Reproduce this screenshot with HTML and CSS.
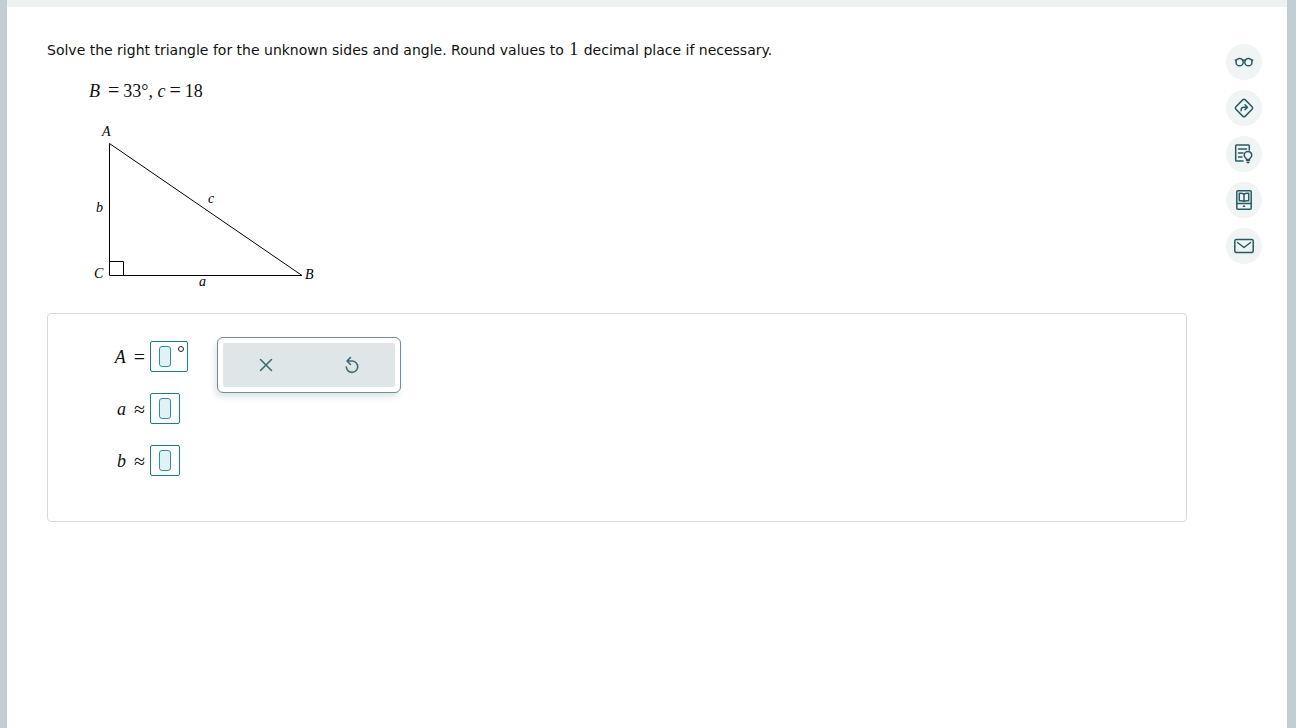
FILE: index.html
```html
<!DOCTYPE html>
<html lang="en">
<head>
<meta charset="utf-8">
<meta name="viewport" content="width=device-width, initial-scale=1">
<title>Solving a right triangle</title>
<link rel="stylesheet" href="styles.css">
</head>
<body>
<div class="page">
  <main class="question">
    <p class="prompt">Solve the right triangle for the unknown sides and angle. Round values to <span class="num">1</span> decimal place if necessary.</p>
    <p class="given"><i class="given-angle">B</i><span class="eq">=</span>33°, <i>c</i><span class="eq">=</span>18</p>
    <svg class="figure" viewBox="0 0 240 180" role="img" aria-label="Right triangle ABC with the right angle at C">
      <path class="edge" d="M22.5 23.500V155.500H215z"/>
      <path class="edge" d="M22.500 141.500h14v14"/>
      <text x="15" y="16">A</text>
      <text x="9" y="92">b</text>
      <text x="121" y="83">c</text>
      <text x="7" y="158">C</text>
      <text x="112" y="166">a</text>
      <text x="218" y="159">B</text>
    </svg>
    <form class="answers">
      <div class="fields">
        <label class="name" for="angle-a"><i>A</i><span class="sign">=</span></label>
        <span class="box"><input class="entry" id="angle-a" type="text"><span class="degree"></span></span>
        <label class="name" for="side-a"><i>a</i><span class="sign">≈</span></label>
        <span class="box"><input class="entry" id="side-a" type="text"></span>
        <label class="name" for="side-b"><i>b</i><span class="sign">≈</span></label>
        <span class="box"><input class="entry" id="side-b" type="text"></span>
      </div>
      <div class="keypad">
        <div class="keys">
          <button class="key" type="button" aria-label="Clear"><svg class="key-icon" viewBox="0 0 18 18"><path d="M3.500 3.500l11 11M14.500 3.500l-11 11"/></svg></button>
          <button class="key" type="reset" aria-label="Undo"><svg class="key-icon" viewBox="0 0 18 18"><path d="M7.500 1.500L4 5l3.500 3.500M4 5h5.500a5.700 5.700 0 1 1-6.200 6"/></svg></button>
        </div>
      </div>
    </form>
  </main>
  <nav class="rail" aria-label="Tools">
    <button class="tool" type="button" aria-label="Accessibility view"><svg class="tool-icon" viewBox="0 0 22 22"><circle cx="6.600" cy="11.200" r="3.600"/><circle cx="15.400" cy="11.200" r="3.600"/><path d="M9.500 9.300q1.500-.8 3 0M3.300 9.700l-1-.7M18.700 9.700l1-.7"/></svg></button>
    <button class="tool" type="button" aria-label="Explanation"><svg class="tool-icon" viewBox="0 0 22 22"><path d="M9.700 2.900q1.300-1.200 2.600 0l6.800 6.800q1.200 1.300 0 2.600l-6.800 6.800q-1.300 1.200-2.600 0L2.900 12.300q-1.200-1.300 0-2.600z"/><path d="M8 13.800c0-2.500 1-3.600 3-3.600h3M12 7.800l2.500 2.400-2.500 2.400"/></svg></button>
    <button class="tool" type="button" aria-label="Hints"><svg class="tool-icon" viewBox="0 0 22 22"><path d="M10 18H3.500q-.8 0-.8-.8V2.800q0-.8.800-.8h12q.8 0 .8.800V7M5.500 6h8M5.500 10h4.500M5.500 14h3.500"/><path d="M13.500 16.500c0-1.500-2.300-2-2.300-4.200a3.800 3.800 0 0 1 7.600 0c0 2.200-2.300 2.700-2.300 4.200zM13.500 17.500h3M14.200 19.500h1.600"/></svg></button>
    <button class="tool" type="button" aria-label="E-book"><svg class="tool-icon" viewBox="0 0 22 22"><rect x="3.800" y="1.800" width="14.400" height="18.400" rx="1"/><path d="M3.800 14.500h14.400M11 4.800v7.500M11 5.300C9.500 4 8 4 6.300 4.300v7.500c1.700-.3 3.200-.3 4.700.7 1.500-1 3-1 4.700-.7V4.300C14 4 12.500 4 11 5.300zM10.400 17.300h1.200"/></svg></button>
    <button class="tool" type="button" aria-label="Message"><svg class="tool-icon" viewBox="0 0 22 22"><rect x="1.800" y="4.500" width="18.400" height="13" rx="1.500"/><path d="M4.500 7.500l6.500 5 6.500-5"/></svg></button>
  </nav>
</div>
</body>
</html>
```
FILE: styles.css
```css
* {
  box-sizing: border-box;
}

body {
  margin: 0;
  background: #c1ced4;
  color: #111;
  font: 14px/26px "DejaVu Sans", Verdana, sans-serif;
}

.page {
  display: flex;
  gap: 39px;
  min-height: 100vh;
  margin: 0 9px 0 7px;
  padding: 30px 25px 30px 40px;
  border-top: 7px solid #edf1f2;
  background: #fff;
}

.question {
  flex: 1;
  min-width: 0;
}

.prompt {
  margin: 0 0 15px;
}

.num,
.given,
.name,
.figure {
  font-family: "Liberation Serif", "Times New Roman", serif;
}

.num {
  margin: 0 1px;
  font-size: 18px;
  line-height: 20px;
}

.given {
  margin: 0 0 16px 42px;
  font-size: 18px;
}

.given-angle {
  margin-right: 4px;
}

.eq {
  margin: 0 4px;
  font-size: 20px;
  line-height: 20px;
}

.sign {
  font-size: 20px;
}

.figure {
  display: block;
  width: 240px;
  height: 180px;
  margin-left: 40px;
  font-size: 14px;
  font-style: italic;
}

.edge {
  fill: none;
  stroke: #000;
}

.answers {
  display: flex;
  align-items: flex-start;
  gap: 29px;
  margin-top: 13px;
  padding: 23px 24px 45px 64px;
  border: 1px solid #d3d9dc;
  border-radius: 4px;
}

.fields {
  display: grid;
  grid-template-columns: 33px 38px;
  column-gap: 5px;
  row-gap: 21px;
  padding-top: 4px;
}

.name {
  display: flex;
  align-items: center;
  justify-content: flex-end;
  gap: 8px;
  font-size: 18px;
}

.box {
  display: flex;
  justify-self: start;
  align-items: center;
  gap: 7px;
  height: 31px;
  padding: 0 8px;
  border: 1px solid #167f87;
  border-radius: 2px;
}

.box:has(.degree) {
  padding-right: 3px;
}

.entry {
  width: 12px;
  height: 21px;
  padding: 0;
  border: 1px solid #2b939c;
  border-radius: 3px;
  background: #e1f2f6;
  font-size: 12px;
}

.degree {
  align-self: flex-start;
  width: 6px;
  height: 6px;
  margin-top: 4px;
  border: 1px solid #222;
  border-radius: 50%;
}

.keypad {
  width: 184px;
  padding: 5px;
  border: 1px solid #6f8e96;
  border-radius: 6px;
  box-shadow: -2px 4px 6px #dce6e8;
}

.keys {
  display: flex;
  border-radius: 2px;
  background: #dfe6e8;
}

.key {
  display: flex;
  flex: 1;
  align-items: center;
  justify-content: center;
  height: 44px;
  padding: 0;
  border: 0;
  background: none;
}

.key-icon {
  width: 18px;
  height: 18px;
  fill: none;
  stroke: #3d6b73;
  stroke-width: 1.6;
  stroke-linecap: round;
  stroke-linejoin: round;
}

.rail {
  display: flex;
  flex-direction: column;
  gap: 10px;
  padding-top: 7px;
}

.tool {
  display: grid;
  place-items: center;
  width: 36px;
  height: 36px;
  padding: 0;
  border: 0;
  border-radius: 50%;
  background: #f1f4f5;
}

.tool-icon {
  width: 22px;
  height: 22px;
  fill: none;
  stroke: #265b65;
  stroke-width: 1.5;
  stroke-linecap: round;
  stroke-linejoin: round;
}
```
